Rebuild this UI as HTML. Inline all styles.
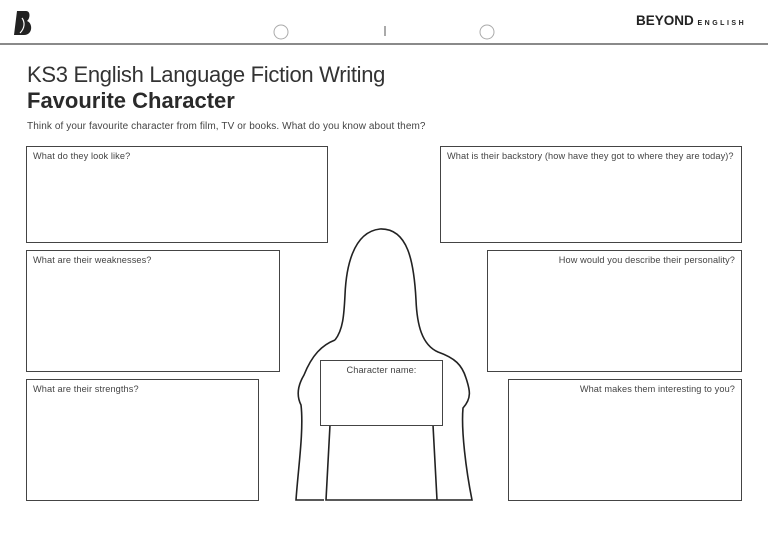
<!DOCTYPE html>
<html><head><meta charset="utf-8"><style>
*{margin:0;padding:0;box-sizing:border-box}
body{width:768px;height:543px;background:#fff;position:relative;overflow:hidden;font-family:"Liberation Sans",sans-serif;color:#333}
.hl{position:absolute;left:0;top:43px;width:768px;height:2px;background:#8a8a8a}
.box{position:absolute;border:1.3px solid #444;font-size:9.2px;color:#444;padding:4px 6px;letter-spacing:0.1px}
.r{text-align:right}
.t1{position:absolute;left:27px;top:62px;font-size:22px;color:#333;letter-spacing:-0.3px}
.t2{position:absolute;left:27px;top:88px;font-size:22px;font-weight:bold;color:#2a2a2a}
.t3{position:absolute;left:27px;top:121px;font-size:10px;color:#444;letter-spacing:0.1px}
</style></head><body>
<svg style="position:absolute;left:14px;top:10px" width="20" height="26" viewBox="0 0 20 26"><path d="M3 1 L12 1 C17 1 16 9 13 11 C19 13 19 25 10 25 L0 25 Z" fill="#222"/><path d="M8 8 C11 12 11 18 6 23" stroke="#fff" stroke-width="1.2" fill="none"/></svg>
<svg style="position:absolute;left:270px;top:22px" width="230" height="20"><circle cx="11" cy="10" r="7" fill="none" stroke="#aaa" stroke-width="1"/><line x1="115" y1="4" x2="115" y2="14" stroke="#555"/><circle cx="217" cy="10" r="7" fill="none" stroke="#aaa" stroke-width="1"/></svg>
<div style="position:absolute;left:636px;top:13px;font-size:13.5px;font-weight:bold;color:#222">BEYOND <span style="font-size:7px;letter-spacing:2.5px">ENGLISH</span></div>
<div class="hl"></div>
<div class="t1">KS3 English Language Fiction Writing</div>
<div class="t2">Favourite Character</div>
<div class="t3">Think of your favourite character from film, TV or books. What do you know about them?</div>
<div class="box" style="left:26px;top:146px;width:302px;height:97px">What do they look like?</div>
<div class="box" style="left:440px;top:146px;width:302px;height:97px">What is their backstory (how have they got to where they are today)?</div>
<div class="box" style="left:26px;top:250px;width:254px;height:122px">What are their weaknesses?</div>
<div class="box r" style="left:487px;top:250px;width:255px;height:122px">How would you describe their personality?</div>
<div class="box" style="left:26px;top:379px;width:233px;height:122px">What are their strengths?</div>
<div class="box r" style="left:508px;top:379px;width:234px;height:122px">What makes them interesting to you?</div>
<svg style="position:absolute;left:0;top:0" width="768" height="543"><path d="M335 340 C343 330 344 315 345 295 C346 270 352 232 380 229 C408 228 414 262 416 300 C417 325 422 345 438 352 C455 358 462 365 466 378 C470 390 472 398 463 408 C461 430 466 470 472 500 L437 500 L433 425 M440 500 L326 500 L330 425 M324 500 L296 500 C298 470 304 430 301 405 C296 395 298 385 304 375 C312 355 322 345 335 340" fill="none" stroke="#222" stroke-width="1.6"/></svg>
<div class="box" style="left:320px;top:360px;width:123px;height:66px;text-align:center;background:#fff">Character name:</div>
</body></html>
